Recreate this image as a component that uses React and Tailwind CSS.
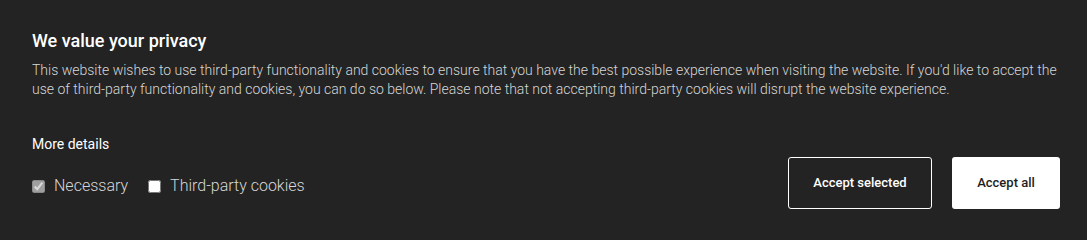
import React, { useState } from "react";

export default function App() {
  const [thirdParty, setThirdParty] = useState(false);

  return (
    <div
      className="w-full h-[240px] bg-[#232323] pl-8 pr-[27px] pt-[29px] text-[#d6d6d6]"
      style={{ fontFamily: "Roboto, 'Liberation Sans', sans-serif" }}
    >
      <h2 className="text-[18px] leading-[24px] font-medium text-white">
        We value your privacy
      </h2>
      <p className="mt-2 text-[14px] leading-[19px] font-light">
        This website wishes to use third-party functionality and cookies to ensure that you have the best possible
        experience when visiting the website. If you'd like to accept the use of third-party functionality and cookies,
        you can do so below. Please note that not accepting third-party cookies will disrupt the website experience.
      </p>

      <div className="mt-9 flex items-start justify-between">
        <div>
          <div className="text-[14px] leading-[19px] text-white">More details</div>
          <div className="mt-[22px] flex items-center text-[16px] leading-[20px] font-light">
            <label className="flex items-center">
              <input type="checkbox" checked disabled readOnly className="w-[13px] h-[13px] m-0" />
              <span className="ml-[9px] text-[#d6d6d6]">Necessary</span>
            </label>
            <label className="ml-[20px] flex items-center">
              <input
                type="checkbox"
                checked={thirdParty}
                onChange={(e) => setThirdParty(e.target.checked)}
                className="w-[13px] h-[13px] m-0"
              />
              <span className="ml-[9px] text-[#d6d6d6]">Third-party cookies</span>
            </label>
          </div>
        </div>

        <div className="mt-[22px] flex gap-5">
          <button className="w-[144px] h-[52px] rounded-[3px] border border-white bg-transparent text-[13px] font-medium text-white">
            Accept selected
          </button>
          <button className="w-[108px] h-[52px] rounded-[3px] bg-white text-[13px] font-medium text-[#1e1e1e]">
            Accept all
          </button>
        </div>
      </div>
    </div>
  );
}
